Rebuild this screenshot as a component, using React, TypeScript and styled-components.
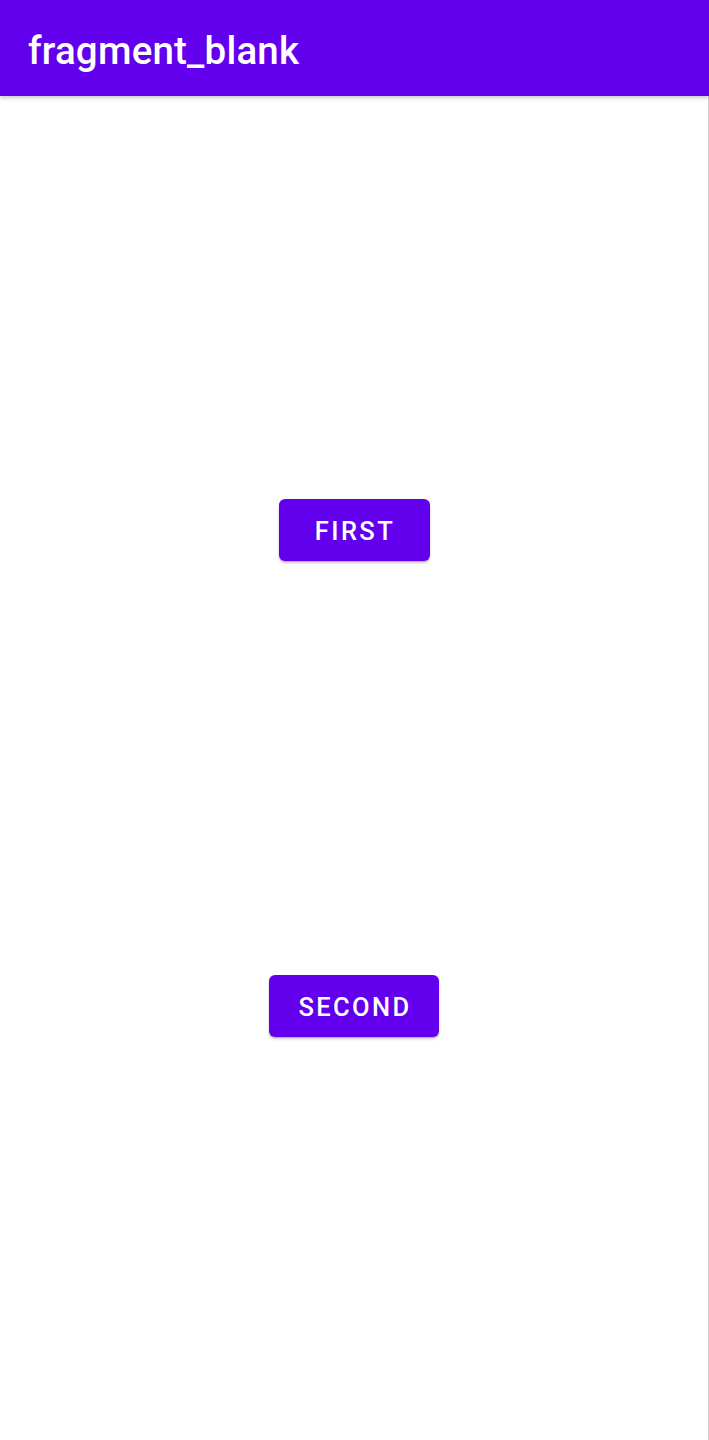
import React from "react";
import styled, { createGlobalStyle } from "styled-components";

const Global = createGlobalStyle`
  html, body {
    margin: 0;
    padding: 0;
    background: #ffffff;
    font-family: Roboto, "Noto Sans", sans-serif;
  }
`;

const App = () => {
  return (
    <Page>
      <Global />
      <Bar>
        <Title>fragment_blank</Title>
      </Bar>
      <Content>
        <Fragment>
          <Button>First</Button>
        </Fragment>
        <Fragment>
          <Button>Second</Button>
        </Fragment>
      </Content>
    </Page>
  );
};

export default App;

const Page = styled.div`
  width: 709px;
  height: 1440px;
  display: flex;
  flex-direction: column;
  overflow: hidden;
`;

const Bar = styled.div`
  height: 96px;
  flex-shrink: 0;
  background: #6200ee;
  display: flex;
  align-items: center;
  padding-left: 28px;
  box-shadow: 0 2px 4px rgba(0, 0, 0, 0.22);
  position: relative;
  z-index: 1;
`;

const Title = styled.div`
  color: #ffffff;
  font-size: 38.5px;
  font-weight: 500;
  letter-spacing: 0.2px;
  margin-top: 4px;
`;

const Content = styled.div`
  flex: 1;
  display: flex;
  flex-direction: column;
  padding-top: 196px;
  border-right: 1px solid #cfcfcf;
`;

const Fragment = styled.div`
  height: 476px;
  display: flex;
  align-items: center;
  justify-content: center;
`;

const Button = styled.button`
  height: 62px;
  min-width: 151px;
  padding: 2px 27px 0 29px;
  border: none;
  border-radius: 6px;
  background: #6200ee;
  color: #ffffff;
  font-family: Roboto, "Noto Sans", sans-serif;
  font-size: 25.5px;
  font-weight: 500;
  letter-spacing: 2.4px;
  text-transform: uppercase;
  box-shadow: 0 2px 3px rgba(0, 0, 0, 0.2), 0 1px 1px rgba(0, 0, 0, 0.14);
`;
